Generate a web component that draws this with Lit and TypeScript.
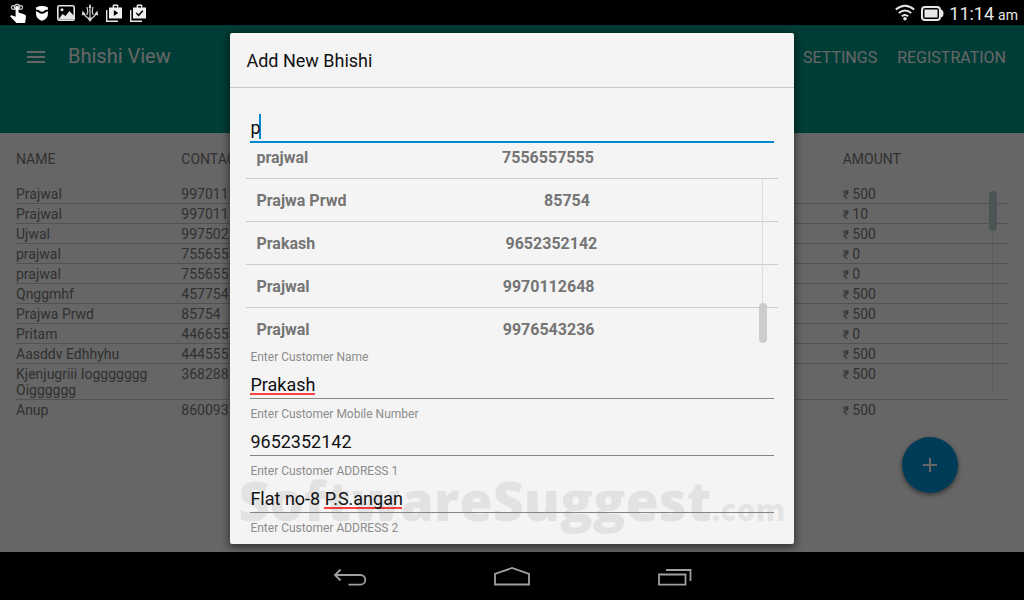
import { LitElement, html, css, svg, nothing } from "lit";
import { customElement, state } from "lit/decorators.js";

interface Bhishi {
  name: string;
  contact: string;
  amount: string;
}

interface Field {
  id: string;
  label: string;
  value: string;
  misspelt?: string;
}

const BHISHIS: Bhishi[] = [
  { name: "Prajwal", contact: "997011", amount: "500" },
  { name: "Prajwal", contact: "997011", amount: "10" },
  { name: "Ujwal", contact: "997502", amount: "500" },
  { name: "prajwal", contact: "755655", amount: "0" },
  { name: "prajwal", contact: "755655", amount: "0" },
  { name: "Qnggmhf", contact: "457754", amount: "500" },
  { name: "Prajwa Prwd", contact: "85754", amount: "500" },
  { name: "Pritam", contact: "446655", amount: "0" },
  { name: "Aasddv Edhhyhu", contact: "444555", amount: "500" },
  { name: "Kjenjugriii Ioggggggg Oigggggg", contact: "368288", amount: "500" },
  { name: "Anup", contact: "860093", amount: "500" },
];

const SUGGESTIONS = [
  { name: "prajwal", phone: "7556557555" },
  { name: "Prajwa Prwd", phone: "85754" },
  { name: "Prakash", phone: "9652352142" },
  { name: "Prajwal", phone: "9970112648" },
  { name: "Prajwal", phone: "9976543236" },
];

const FIELDS: Field[] = [
  { id: "name", label: "Enter Customer Name", value: "Prakash", misspelt: "Prakash" },
  { id: "mobile", label: "Enter Customer Mobile Number", value: "9652352142" },
  { id: "address1", label: "Enter Customer ADDRESS 1", value: "Flat no-8 P.S.angan", misspelt: "P.S.angan" },
];

const pen = document.createElement("canvas").getContext("2d")!;

/** Width of a text as the form inputs draw it. */
function textWidth(text: string): number {
  pen.font = "18px Roboto";
  return Math.round(pen.measureText(text).width);
}

@customElement("status-bar")
export class StatusBar extends LitElement {
  static styles = css`
    :host {
      display: flex;
      align-items: center;
      justify-content: space-between;
      height: 25px;
      padding: 0 6px 0 8px;
      background: #000;
      color: #e6e6e6;
    }
    .group {
      display: flex;
      align-items: center;
      gap: 4px;
    }
    .clock {
      display: flex;
      align-items: baseline;
      gap: 4px;
      font-size: 18px;
      line-height: 22px;
      padding-top: 4px;
    }
    .period {
      font-size: 14px;
    }
    svg {
      display: block;
    }
  `;

  private icon(body: unknown, width = 20) {
    return html`<svg width=${width} height="22" viewBox="0 0 ${width} 22" aria-hidden="true">${body}</svg>`;
  }

  private bag(mark: unknown) {
    return svg`
      <path d="M2.7 8v11.3H14" fill="none" stroke="#e6e6e6" stroke-width="1.4"/>
      <path d="M5 5.5h3.6V4q0-1.4 1.4-1.4h3q1.4 0 1.4 1.4v1.5H18V16.5H5zM10 5.5h3.2V4H10z" fill="#f0f0f0" fill-rule="evenodd"/>
      ${mark}`;
  }

  render() {
    return html`
      <div class="group">
        ${this.icon(svg`
          <g fill="none" stroke="#d8d8d8" stroke-width="1.2">
            <circle cx="5.3" cy="5.5" r="1.8"/><circle cx="12.7" cy="5.5" r="1.8"/><circle cx="9" cy="5" r="2.6"/>
          </g>
          <path d="M7.6 4.5q1.5-1.6 2.9 0V10.5l5.5 1.7q2.3.7 2 2.8l-1 6H8.5L2.2 14.4q.9-1.5 2.3-.9l3.1 1.2z" fill="#fff"/>`)}
        ${this.icon(svg`
          <path d="M4 5.5q6-2.8 12 0l-.3 2.5q-2.6-.6-3.7 1.2-2 .9-4 0Q6.9 7.4 4.3 8zM3.9 9.2q2.4.3 3.3 1.9 2.8 1.2 5.6 0 .9-1.6 3.3-1.9l-.4 4.5q-1.2 3.6-5.7 5-4.5-1.4-5.7-5z" fill="#fff"/>`)}
        ${this.icon(svg`
          <rect x="1.8" y="3.8" width="16.4" height="14.4" rx="1.5" fill="none" stroke="#e6e6e6" stroke-width="1.6"/>
          <circle cx="6" cy="7.8" r="1.5" fill="#e6e6e6"/>
          <path d="M2.5 17.5 6.5 12l3 2 4-5 4.5 5v3.5z" fill="#e6e6e6"/>`)}
        ${this.icon(svg`
          <path d="M10 3v16M3.5 10.5q1.5 5 6.5 6 5-1 6.5-6M6.8 5q2 5-.3 8M13.2 5q-2 5 .3 8M7 15l3 4 3-4" fill="none" stroke="#d0d0d0" stroke-width="1.2"/>
          <path d="M10 1.5 8.6 6h2.8zM1.8 13.5 2.6 8.5l3 4zM18.2 13.5 17.4 8.5l-3 4z" fill="#d8d8d8"/>`)}
        ${this.icon(this.bag(svg`<path d="M9.8 8v6l4.4-3z" fill="#000"/>`))}
        ${this.icon(this.bag(svg`<path d="M8.3 11l2.3 2.3 4.2-4.5" fill="none" stroke="#000" stroke-width="1.5"/>`))}
      </div>
      <div class="group">
        ${this.icon(svg`
          <g fill="none" stroke="#e6e6e6" stroke-width="2">
            <path d="M.8 7.5q9.2-7.6 18.4 0M3.8 11q6.2-5 12.4 0M6.8 14.3q3.2-2.6 6.4 0"/>
          </g>
          <circle cx="10" cy="16.8" r="1.8" fill="#e6e6e6"/>`)}
        ${this.icon(svg`
          <rect x="3" y="5" width="18" height="13" rx="3" fill="none" stroke="#e6e6e6" stroke-width="2"/>
          <rect x="5.5" y="7.5" width="13" height="8" fill="#e6e6e6"/>
          <path d="M22 7.5q2.5.5 2.5 4t-2.5 4z" fill="#e6e6e6"/>`, 26)}
        <div class="clock"><span>11:14</span><span class="period">am</span></div>
      </div>
    `;
  }
}

@customElement("bhishi-page")
export class BhishiPage extends LitElement {
  static styles = css`
    :host {
      display: block;
      position: relative;
      background: #fff;
      overflow: hidden;
    }
    .appbar {
      display: flex;
      align-items: flex-start;
      box-sizing: border-box;
      height: 108px;
      padding: 20px 16px 0 24px;
      background: #009988;
      color: #fff;
    }
    .menu {
      display: block;
      width: 24px;
      height: 24px;
      margin-right: 20px;
      padding: 0;
      border: 0;
      background: none;
      color: inherit;
    }
    .title {
      flex: 1;
      margin: 0;
      font-size: 20px;
      font-weight: 400;
      line-height: 22px;
    }
    .links {
      display: flex;
      gap: 20px;
      padding-right: 2px;
    }
    .link {
      color: inherit;
      font-size: 16px;
      line-height: 26px;
      text-decoration: none;
    }
    .content {
      padding: 0 16px;
    }
    .table {
      width: 100%;
      border-collapse: separate;
      border-spacing: 0;
      table-layout: fixed;
      color: #7a7a7a;
      font-size: 14px;
      line-height: 16px;
    }
    .head {
      height: 51px;
      padding: 0;
      font-weight: 400;
      text-align: left;
    }
    .cell {
      padding: 2px 16px 1px 0;
      border-bottom: 1px solid #c4d0d0;
      vertical-align: top;
    }
    .row:last-child .cell {
      border-bottom: 0;
    }
    .rupee {
      font-size: 12px;
      line-height: 12px;
    }
    .track {
      position: absolute;
      top: 166px;
      right: 31px;
      width: 1px;
      height: 200px;
      background: #e2e6e6;
    }
    .thumb {
      position: absolute;
      top: 166px;
      right: 27px;
      width: 8px;
      height: 40px;
      border-radius: 4px;
      background: #bfd2d6;
    }
    .fab {
      position: absolute;
      right: 66px;
      bottom: 59px;
      display: grid;
      place-items: center;
      width: 56px;
      height: 56px;
      padding: 0;
      border: 0;
      border-radius: 50%;
      background: #0094dc;
      box-shadow: 0 2px 5px rgba(0, 0, 0, 0.5);
      color: #fff;
    }
    .scrim {
      position: absolute;
      inset: 0;
      background: rgba(0, 0, 0, 0.6);
    }
  `;

  render() {
    return html`
      <header class="appbar">
        <button class="menu" aria-label="Menu">
          <svg width="24" height="24" viewBox="0 0 24 24" fill="currentColor"><path d="M3 18h18v-2H3zM3 13h18v-2H3zM3 6v2h18V6z"/></svg>
        </button>
        <h1 class="title">Bhishi View</h1>
        <nav class="links">
          <a class="link" href="#settings">SETTINGS</a>
          <a class="link" href="#registration">REGISTRATION</a>
        </nav>
      </header>
      <main class="content">
        <table class="table">
          <thead>
            <tr>
              <th class="head">NAME</th>
              <th class="head">CONTACT</th>
              <td class="head" colspan="3"></td>
              <th class="head">AMOUNT</th>
            </tr>
          </thead>
          <tbody>
            ${BHISHIS.map(
              (b) => html`<tr class="row">
                <td class="cell">${b.name}</td>
                <td class="cell">${b.contact}</td>
                <td class="cell" colspan="3"></td>
                <td class="cell"><span class="rupee">₹</span> ${b.amount}</td>
              </tr>`
            )}
          </tbody>
        </table>
      </main>
      <div class="track"></div>
      <div class="thumb"></div>
      <button class="fab" aria-label="Add">
        <svg width="14" height="14" viewBox="0 0 14 14" fill="currentColor"><path d="M6 0h2v6h6v2H8v6H6V8H0V6h6z"/></svg>
      </button>
      <div class="scrim"></div>
    `;
  }
}

@customElement("bhishi-dialog")
export class BhishiDialog extends LitElement {
  static styles = css`
    :host {
      display: flex;
      flex-direction: column;
      position: relative;
      border-radius: 2px;
      background: #f4f4f4;
      box-shadow: 0 2px 8px 1px rgba(0, 0, 0, 0.55);
      color: #111;
      overflow: hidden;
    }
    .title {
      margin: 0;
      padding: 16px 16px 14px;
      border-bottom: 1px solid #c8c8c8;
      font-size: 18px;
      font-weight: 400;
      line-height: 24px;
    }
    .body {
      flex: 1;
      min-height: 0;
      padding: 0 16px;
      overflow: hidden;
    }
    .box {
      position: relative;
      margin: 0 4px;
    }
    .input {
      display: block;
      position: relative;
      z-index: 1;
      box-sizing: border-box;
      width: 100%;
      height: 36px;
      padding: 8px 0 0;
      border: 0;
      border-bottom: 1px solid #858585;
      border-radius: 0;
      outline: 0;
      background: none;
      color: #111;
      font: 18px Roboto, sans-serif;
    }
    .search {
      height: 55px;
      padding: 26px 0 0;
      border-bottom: 2px solid #0288d1;
      caret-color: transparent;
    }
    .caret {
      position: absolute;
      bottom: 4px;
      width: 2px;
      height: 25px;
      background: #0288d1;
    }
    .spell {
      position: absolute;
      bottom: 4px;
      height: 2px;
      background: #fa4040;
    }
    .results {
      position: relative;
      display: flex;
      flex-direction: column;
      justify-content: flex-end;
      height: 208px;
      overflow: hidden;
    }
    .list {
      margin: 0;
      padding: 0;
      list-style: none;
    }
    .item {
      border-bottom: 1px solid #cccccc;
    }
    .item:last-child {
      border-bottom-color: transparent;
    }
    .option {
      display: flex;
      width: 100%;
      height: 42px;
      padding: 0;
      border: 0;
      align-items: center;
      background: none;
      color: #757575;
      font: 700 16px Roboto, sans-serif;
      text-align: left;
    }
    .part {
      flex: 1 1 auto;
      padding-left: 10px;
    }
    .track {
      position: absolute;
      top: 36px;
      right: 15px;
      width: 1px;
      height: 142px;
      background: #dcdcdc;
    }
    .thumb {
      position: absolute;
      bottom: 8px;
      right: 11px;
      width: 8px;
      height: 40px;
      border-radius: 4px;
      background: #cccccc;
    }
    .label {
      display: block;
      margin: 0 4px;
      color: #8c8c8c;
      font-size: 12px;
      line-height: 12px;
    }
    .field {
      margin-bottom: 9px;
    }
    .watermark {
      position: absolute;
      left: 8px;
      bottom: 16px;
      color: rgba(0, 0, 0, 0.07);
      font: 800 54px/56px "Open Sans", sans-serif;
      pointer-events: none;
      white-space: nowrap;
    }
    .domain {
      font-size: 30px;
      line-height: 30px;
    }
  `;

  @state() private query = "p";

  private field(f: Field) {
    const before = f.misspelt ? f.value.slice(0, f.value.indexOf(f.misspelt)) : "";
    return html`<div class="field">
      <label class="label" for=${f.id}>${f.label}</label>
      <div class="box">
        <input class="input" id=${f.id} type="text" spellcheck="false" .value=${f.value} />
        ${f.misspelt
          ? html`<span class="spell" style="left:${textWidth(before)}px;width:${textWidth(f.misspelt)}px"></span>`
          : nothing}
      </div>
    </div>`;
  }

  render() {
    return html`
      <h2 class="title">Add New Bhishi</h2>
      <div class="body">
        <div class="box">
          <input
            class="input search"
            type="text"
            aria-label="Search customer"
            .value=${this.query}
            @input=${(e: Event) => (this.query = (e.target as HTMLInputElement).value)}
          />
          <span class="caret" style="left:${textWidth(this.query) - 1}px"></span>
        </div>
        <div class="results">
          <ul class="list">
            ${SUGGESTIONS.map(
              (s) => html`<li class="item">
                <button class="option"><span class="part">${s.name}</span><span class="part">${s.phone}</span></button>
              </li>`
            )}
          </ul>
          <div class="track"></div>
          <div class="thumb"></div>
        </div>
        ${FIELDS.map((f) => this.field(f))}
        <span class="label">Enter Customer ADDRESS 2</span>
      </div>
      <div class="watermark" aria-hidden="true">SoftwareSuggest<span class="domain">.com</span></div>
    `;
  }
}

@customElement("nav-bar")
export class NavBar extends LitElement {
  static styles = css`
    :host {
      display: flex;
      align-items: center;
      justify-content: center;
      gap: 122px;
      height: 48px;
      background: #000;
    }
    .key {
      display: block;
      width: 40px;
      height: 24px;
      padding: 0;
      border: 0;
      background: none;
    }
    svg {
      display: block;
    }
  `;

  private key(label: string, d: string) {
    return html`<button class="key" aria-label=${label}>
      <svg width="40" height="24" viewBox="0 0 40 24" fill="none" stroke="#a0a0a0" stroke-width="1.8"><path d=${d} /></svg>
    </button>`;
  }

  render() {
    return html`
      ${this.key("Back", "M5 11h25.5a4.8 4.8 0 0 1 0 9.6H18.5M10.5 5.5 5 11l5.5 5.5")}
      ${this.key("Home", "M3 20.5V10L20 4l17 6v10.5z")}
      ${this.key("Recent apps", "M5 10.5h26.5V20.6H5zM12 6h24.5v11")}
    `;
  }
}

@customElement("app-root")
export class AppRoot extends LitElement {
  static styles = css`
    :host {
      display: flex;
      flex-direction: column;
      position: relative;
      height: 100vh;
      font-family: Roboto, sans-serif;
    }
    .page {
      flex: 1;
      min-height: 0;
    }
    .overlay {
      position: absolute;
      inset: 33px 0 56px;
      display: flex;
      justify-content: center;
    }
    .dialog {
      width: 55%;
      min-width: 320px;
    }
  `;

  render() {
    return html`
      <status-bar></status-bar>
      <bhishi-page class="page"></bhishi-page>
      <nav-bar></nav-bar>
      <div class="overlay"><bhishi-dialog class="dialog"></bhishi-dialog></div>
    `;
  }
}
